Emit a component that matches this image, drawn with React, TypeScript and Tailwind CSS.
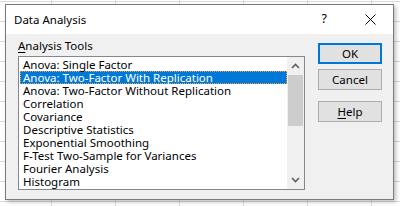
import React from 'react';

const tools = [
  'Anova: Single Factor',
  'Anova: Two-Factor With Replication',
  'Anova: Two-Factor Without Replication',
  'Correlation',
  'Covariance',
  'Descriptive Statistics',
  'Exponential Smoothing',
  'F-Test Two-Sample for Variances',
  'Fourier Analysis',
  'Histogram',
];

function Chevron({ down }: { down?: boolean }) {
  return (
    <svg width="9" height="6" viewBox="0 0 9 6" className={down ? 'rotate-180' : ''}>
      <path d="M1 5 L4.5 1.5 L8 5" fill="none" stroke="#606060" strokeWidth="1.6" />
    </svg>
  );
}

export default function App() {
  return (
    <div className="h-[206px] w-[400px] overflow-hidden bg-white bg-[linear-gradient(to_right,#d9d9d9_1px,transparent_1px),linear-gradient(to_bottom,#d9d9d9_1px,transparent_1px)] bg-size-[64px_20px] bg-position-[51px_1px] pl-[5px] pt-[4px] font-['Noto_Sans',sans-serif] text-[11px] text-black">
      <div className="flex h-[196px] w-[389px] flex-col border border-[#7a7a7a] bg-[#f0f0f0] shadow-[2px_2px_4px_rgba(0,0,0,0.25)]">
        <div className="flex h-[29px] shrink-0 items-center bg-white pl-[8px] text-[11.5px]">
          <span className="leading-none">Data Analysis</span>
          <span className="ml-auto mr-[38px] text-[12.5px] leading-none">?</span>
          <svg width="11" height="11" viewBox="0 0 11 11" className="mr-[17px]">
            <path d="M0.5 0.5 L10.5 10.5 M10.5 0.5 L0.5 10.5" stroke="#000" strokeWidth="1" />
          </svg>
        </div>

        <div className="flex flex-1 pl-[12px] pr-[10px]">
          <div className="flex w-[287px] flex-col">
            <div className="flex h-[22px] items-center pt-[2px] text-[11.5px] leading-none">
              <span><span className="underline underline-offset-2">A</span>nalysis Tools</span>
            </div>
            <div className="flex h-[134px] border border-[#828790] bg-white">
              <ul className="flex-1 pl-[1px] pt-[1px] text-[11.5px]">
                {tools.map((t, i) => (
                  <li
                    key={t}
                    className={
                      i === 1
                        ? 'h-[13px] whitespace-nowrap border border-dotted border-[#f0a040] bg-[#0078d7] pl-[2px] leading-[11px] text-white'
                        : 'h-[13px] whitespace-nowrap pl-[3px] leading-[13px]'
                    }
                  >
                    {t}
                  </li>
                ))}
              </ul>
              <div className="flex w-[17px] flex-col items-center bg-[#f0f0f0]">
                <div className="flex h-[18px] w-full items-center justify-center">
                  <Chevron />
                </div>
                <div className="h-[51px] w-[15px] bg-[#cdcdcd]" />
                <div className="mt-auto flex h-[18px] w-full items-center justify-center">
                  <Chevron down />
                </div>
              </div>
            </div>
          </div>

          <div className="ml-[13px] flex flex-1 flex-col pt-[9px]">
            <button className="h-[21px] w-[64px] border-2 border-[#0078d7] bg-[#e1e1e1] text-[11.5px] leading-none">OK</button>
            <button className="mt-[5px] h-[21px] w-[64px] border border-[#adadad] bg-[#e1e1e1] text-[11.5px] leading-none">Cancel</button>
            <button className="mt-[11px] h-[21px] w-[64px] border border-[#adadad] bg-[#e1e1e1] text-[11.5px] leading-none">
              <span className="underline underline-offset-2">H</span>elp
            </button>
          </div>
        </div>
      </div>
    </div>
  );
}
